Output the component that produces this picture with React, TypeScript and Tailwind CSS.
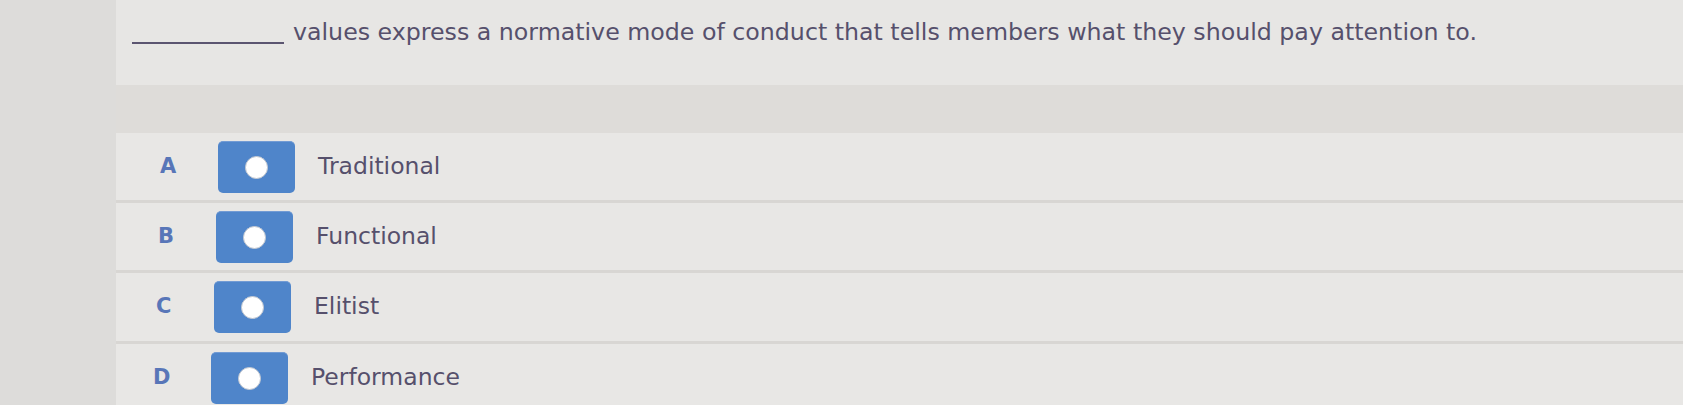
import React from 'react';

const options = [
  { key: 'A', label: 'Traditional', h: 'h-[67px]', pad: 'pl-[7px]' },
  { key: 'B', label: 'Functional', h: 'h-[70px]', pad: 'pl-[5px]' },
  { key: 'C', label: 'Elitist', h: 'h-[71px]', pad: 'pl-[3px]' },
  { key: 'D', label: 'Performance', h: 'h-[70px]', pad: 'pl-0' },
];

function RadioTile() {
  return (
    <div className="flex h-[52px] w-[77px] shrink-0 items-center justify-center rounded-[5px] border-t border-[#729bd4] bg-[#4f85ca]">
      <span className="h-[23px] w-[23px] rounded-full border border-[#c3c8d0] bg-white" />
    </div>
  );
}

export default function App() {
  return (
    <div
      className="flex h-[405px] w-full overflow-hidden bg-[#dddcda]"
      style={{ fontFamily: '"DejaVu Sans", Verdana, sans-serif' }}
    >
      <div className="w-[116px] shrink-0" />
      <div className="flex min-w-0 flex-1 flex-col">
        <div className="flex h-[85px] shrink-0 items-start bg-[#e7e6e4] pl-[16px] pt-[15px]">
          <span className="mt-[27px] w-[152px] border-b-2 border-[#5b5570]" />
          <span className="ml-[9px] whitespace-nowrap text-[23.7px] leading-[34px] text-[#56506c]">
            values express a normative mode of conduct that tells members what they should pay attention to.
          </span>
        </div>
        <div className="h-[48px] shrink-0 bg-[#dedcd9]" />
        <div className="flex flex-col">
          {options.map((o, i) => (
            <div
              key={o.key}
              className={`flex shrink-0 ${o.h} ${o.pad} items-center bg-[#e8e7e5] ${i > 0 ? 'border-t-[3px] border-[#d8d6d3]' : ''}`}
            >
              <div className="w-[95px] shrink-0 pl-[37px]">
                <span className="text-[21px] font-bold text-[#5876b8]">{o.key}</span>
              </div>
              <RadioTile />
              <span className="ml-[23px] text-[23.5px] text-[#56506c]">{o.label}</span>
            </div>
          ))}
        </div>
      </div>
    </div>
  );
}
